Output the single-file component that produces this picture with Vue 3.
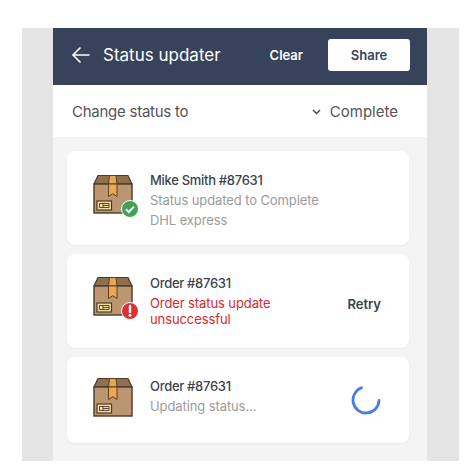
<template>
    <div class="page">
        <div class="frame">
            <div class="phone">
                <header class="topbar">
                    <svg class="back" width="20" height="18" viewBox="0 0 20 18" fill="none" stroke="#fff" stroke-width="1.6">
                        <path d="M18.5 9H2M9.5 1.5 2 9l7.5 7.5" />
                    </svg>
                    <span class="title">Status updater</span>
                    <span class="clear">Clear</span>
                    <button class="share">Share</button>
                </header>
                <div class="status-row">
                    <span class="label">Change status to</span>
                    <span class="select">
                        <svg width="9" height="6" viewBox="0 0 9 6" fill="none" stroke="#444" stroke-width="1.4">
                            <path d="M1 1l3.5 3.5L8 1" />
                        </svg>
                        Complete
                    </span>
                </div>
                <div class="list">
                    <div v-for="o in orders" :key="o.id" class="card" :class="o.kind">
                        <div class="icon">
                            <svg width="40" height="40" viewBox="0 0 40 40">
                                <path d="M1 10 5 1.500h30L39 10z" fill="#8f6f4c" stroke="#4a3a2c" stroke-width="1.200" stroke-linejoin="round" />
                                <rect x="1" y="10" width="38" height="29" fill="#bb9670" stroke="#4a3a2c" stroke-width="1.400" />
                                <path d="M16.500 1.500h6.500l1 8.500h-8.500z" fill="#e0a95a" stroke="#5c4020" stroke-width="1" />
                                <path d="M15.500 10H24v12.500l-4.200-2.800-4.300 2.800z" fill="#eda94f" stroke="#5c4020" stroke-width="1" />
                                <rect x="4" y="27" width="14.500" height="9" fill="#f0dca0" stroke="#4a3a2c" stroke-width="1.200" />
                                <path d="M6.500 29.500h9.500v4H6.500zM10 29.500v4M10 31.500h6" fill="none" stroke="#4a3a2c" stroke-width="0.900" />
                            </svg>
                            <svg v-if="o.kind === 'done'" class="badge" width="18" height="18" viewBox="0 0 18 18">
                                <circle cx="9" cy="9" r="8.500" fill="#43a055" stroke="#fff" stroke-width="1" />
                                <path d="M5 9.300l2.800 2.700L13 6.600" fill="none" stroke="#fff" stroke-width="2" />
                            </svg>
                            <svg v-if="o.kind === 'failed'" class="badge" width="18" height="18" viewBox="0 0 18 18">
                                <circle cx="9" cy="9" r="8.500" fill="#dc2f2f" stroke="#fff" stroke-width="1" />
                                <path d="M9 4v6" stroke="#fff" stroke-width="2.400" stroke-linecap="round" />
                                <circle cx="9" cy="13.300" r="1.400" fill="#fff" />
                            </svg>
                        </div>
                        <div class="text">
                            <div class="name">{{ o.name }}</div>
                            <div v-for="l in o.lines" :key="l" class="line">{{ l }}</div>
                        </div>
                        <span v-if="o.kind === 'failed'" class="retry">Retry</span>
                        <svg v-if="o.kind === 'pending'" class="spinner" width="30" height="30" viewBox="0 0 30 30" fill="none" stroke="#4a7de0" stroke-width="2.800" stroke-linecap="round">
                            <path d="M10.500 2.800A13 13 0 1 0 28 15.500" />
                        </svg>
                    </div>
                </div>
            </div>
        </div>
    </div>
</template>

<script setup>
const orders = [
    { id: 1, kind: "done", name: "Mike Smith #87631", lines: ["Status updated to Complete", "DHL express"] },
    { id: 2, kind: "failed", name: "Order #87631", lines: ["Order status update", "unsuccessful"] },
    { id: 3, kind: "pending", name: "Order #87631", lines: ["Updating status..."] },
]
</script>

<style>
html, body {
    background: #fff;
}
</style>

<style scoped>
.page {
    width: 474px;
    height: 467px;
    box-sizing: border-box;
    padding: 28px 15px 6px 22px;
    font-family: "Inter", "Liberation Sans", sans-serif;
    overflow: hidden;
}

.frame {
    height: 100%;
    background: #e4e4e4;
    padding: 0 32px 0 31px;
}

.phone {
    height: 100%;
    background: #f4f4f4;
}

.topbar {
    height: 57px;
    box-sizing: border-box;
    background: #36435a;
    display: flex;
    align-items: center;
    padding: 0 17px 3px 18px;
    color: #fff;
}

.back {
    margin-right: 12px;
}

.title {
    font-size: 17px;
    flex: 1;
}

.clear {
    font-size: 13px;
    font-weight: 600;
    margin-right: 25px;
}

.share {
    width: 82px;
    height: 32px;
    border: 0;
    border-radius: 3px;
    background: #fff;
    color: #36435a;
    font: 600 13px "Inter", sans-serif;
}

.status-row {
    height: 52px;
    background: #fff;
    display: flex;
    align-items: center;
    justify-content: space-between;
    padding: 0 29px 0 19px;
    font-size: 15px;
    color: #555;
}

.label {
    letter-spacing: -0.25px;
}

.select svg {
    margin: 0 5px 2px 0;
}

.list {
    display: flex;
    flex-direction: column;
    gap: 9px;
    padding: 14px 18px 0 14px;
}

.card {
    height: 94px;
    box-sizing: border-box;
    background: #fff;
    border-radius: 8px;
    box-shadow: 0 1px 2px rgba(0, 0, 0, 0.05);
    display: flex;
    align-items: center;
    padding: 0 28px 0 26px;
}

.card.pending {
    height: 86px;
}

.icon {
    position: relative;
    width: 40px;
    height: 40px;
    margin: 0 17px 8px 0;
}

.failed .icon {
    margin-bottom: 10px;
}

.pending .icon {
    margin-bottom: 7px;
}

.badge {
    position: absolute;
    right: -6px;
    bottom: -4px;
}

.text {
    flex: 1;
}

.done .text {
    padding-top: 4px;
}

.failed .text {
    padding-bottom: 2px;
}

.pending .text {
    padding-bottom: 8px;
}

.name {
    font-size: 13px;
    font-weight: 500;
    letter-spacing: -0.3px;
    color: #3d4250;
    line-height: 20px;
}

.line {
    font-size: 13px;
    letter-spacing: -0.1px;
    color: #9b9b9b;
    line-height: 20px;
}

.failed .name {
    margin-bottom: 2px;
}

.failed .line {
    color: #d9282f;
    line-height: 16px;
}

.retry {
    font-size: 13px;
    font-weight: 600;
    color: #3d4250;
    margin-top: 6px;
}
</style>
